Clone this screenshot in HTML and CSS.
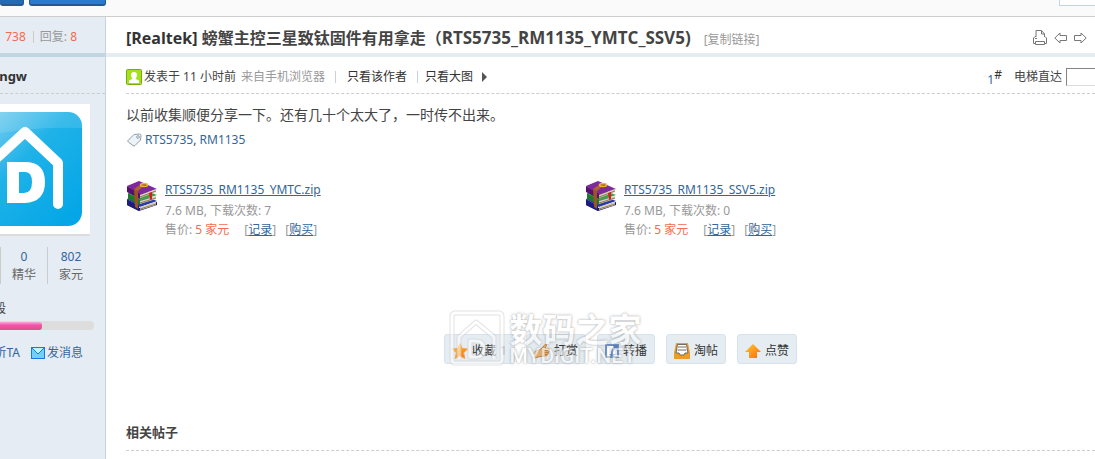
FILE: index.html
```html
<!DOCTYPE html>
<html lang="zh-CN">
<head>
<meta charset="utf-8">
<title>螃蟹主控三星致钛固件有用拿走</title>
<link rel="stylesheet" href="styles.css">
</head>
<body>
<svg class="defs" aria-hidden="true">
  <defs>
    <linearGradient id="sky" x1="0" y1="0" x2="1" y2="1"><stop offset="0" stop-color="#9bd8f2"/><stop offset=".45" stop-color="#1fb2e8"/><stop offset="1" stop-color="#00a4e6"/></linearGradient>
    <linearGradient id="gold" x1="0" y1="0" x2="1" y2="1"><stop offset="0" stop-color="#ffc928"/><stop offset="1" stop-color="#fb6a10"/></linearGradient>
    <symbol id="archive" viewBox="0 0 32 32">
      <path d="M1 21l12 7 18-6v3l-18 6-12-6z" fill="#14146e"/>
      <path d="M1 19l13-5 17 7-17 6z" fill="#2a3ba8"/><path d="M1 19l12 7v5L1 25z" fill="#1c1c80"/><path d="M14 27l16-5v3l-16 5z" fill="#d9cfb6"/><path d="M14 29l16-5" stroke="#8f7c58"/>
      <path d="M2 13l12-5 17 7-17 6z" fill="#43a047"/><path d="M2 13l12 7v5L2 19z" fill="#1d7a2c"/><path d="M14 21l16-5v3l-16 5z" fill="#d9cfb6"/><path d="M14 23l16-5" stroke="#8f7c58"/>
      <path d="M1 6L13 1l18 8-17 6z" fill="#7e2a9b"/><path d="M1 6l13 8v5L1 12z" fill="#551070"/><path d="M14 15l16-6v3l-16 6z" fill="#d9cfb6"/><path d="M14 17l16-6" stroke="#8f7c58"/>
      <path d="M8 9l4 2v18l-3-2z" fill="#9c5424"/><path d="M8 9l9-6 3 1-8 7z" fill="#b3652c"/>
      <ellipse cx="18" cy="5" rx="3.500" ry="1.500" fill="none" stroke="#e8b92c" stroke-width="1.500"/><path d="M23 13l3-1v7l-2 1z" fill="#d02020"/>
    </symbol>
  </defs>
</svg>

<header class="top">
  <div class="top-actions">
    <button class="blue dark" type="button" aria-label="发帖"></button>
    <button class="blue" type="button" aria-label="回复"></button>
  </div>
  <div class="top-box"></div>
</header>

<div class="thread">
  <aside class="side">
    <div class="counts"><b>738</b><i></i><span>回复: <b>8</b></span></div>
    <div class="user"><a href="#">angw</a></div>
    <div class="profile">
      <div class="avatar">
        <svg width="114" height="114" viewBox="0 0 114 114" role="img" aria-label="头像">
          <rect width="114" height="114" rx="14" fill="url(#sky)"/>
          <path d="M0 28Q50 14 114 16V14A14 14 0 0 0 100 0H14A14 14 0 0 0 0 14z" fill="#fff" opacity=".12"/>
          <path d="M20 93V54L57 20l33 31v41" fill="none" stroke="#fff" stroke-width="10" stroke-linecap="round" stroke-linejoin="round"/>
          <path fill-rule="evenodd" d="M39 50h18q20 0 20 20t-20 21H39zm12 10v21h5q8 0 8-11t-8-10z" fill="#fff"/>
        </svg>
      </div>
      <dl class="stats">
        <div><dt>0</dt><dd>精华</dd></div>
        <div><dt>802</dt><dd>家元</dd></div>
      </dl>
      <p class="rank">七段</p>
      <div class="bar"><span style="width:60%"></span></div>
      <div class="links">
        <a href="#">收听TA</a>
        <a href="#"><svg width="14" height="12" viewBox="0 0 14 12"><rect x=".5" y=".5" width="13" height="11" fill="#6fd0fa" stroke="#1a78e0"/><path d="M1 1l6 6 6-6" fill="#c4f0ff" stroke="#1a78e0"/></svg>发消息</a>
      </div>
    </div>
  </aside>

  <main class="main">
    <div class="title">
      <h1><a href="#">[Realtek]</a> 螃蟹主控三星致钛固件有用拿走（<span>RTS5735_RM1135_YMTC_SSV5)</span></h1>
      <a class="copy" href="#">[复制链接]</a>
      <div class="tools">
        <a href="#" aria-label="打印"><svg width="14" height="15" viewBox="0 0 14 15"><path d="M3 7V.5h5.500L11.500 4v3M8.500 1v3h3M3 6.500H2L.5 8v5.500H2m9.500-7h.5L13.500 8v5.500H12M2.500 11.500h9v3h-9zM2 8.500h2" fill="none" stroke="#777"/></svg></a>
        <a href="#" aria-label="上一主题"><svg width="13" height="12" viewBox="0 0 13 12"><path d="M.8 6L6 1v2.500h6.500v5H6V11z" fill="none" stroke="#777"/></svg></a>
        <a href="#" aria-label="下一主题"><svg width="13" height="12" viewBox="0 0 13 12"><path d="M12.200 6L7 1v2.500H.5v5H7V11z" fill="none" stroke="#777"/></svg></a>
      </div>
    </div>

    <div class="meta">
      <svg width="16" height="16" viewBox="0 0 16 16"><rect x=".5" y=".5" width="15" height="15" rx="1" fill="#a4e01c" stroke="#78ac0c"/><path d="M8 3a3 3 0 0 1 3 3c0 1.500-.6 2.500-1.200 3.200V10l3.200 1.600V14H3v-2.400L6.200 10v-.8C5.600 8.500 5 7.500 5 6a3 3 0 0 1 3-3z" fill="#fff"/></svg>
      <span class="posted">发表于 11 小时前</span>
      <span class="from">来自手机浏览器</span>
      <i></i><a href="#">只看该作者</a>
      <i></i><a href="#">只看大图</a>
      <span class="arrow"></span>
      <a class="floor" href="#">1<sup>#</sup></a>
      <label for="jump">电梯直达</label>
      <input id="jump" type="text">
    </div>

    <article class="post">
      <p class="message">以前收集顺便分享一下。还有几十个太大了，一时传不出来。</p>
      <div class="tags">
        <svg width="15" height="14" viewBox="0 0 15 14"><path d="M1 7.500L7 1.500 12.500 1q1.500 0 1.500 1.500L13.500 7 8 12.500q-1 1-2 0L1.300 9q-.8-.7-.3-1.500z" fill="#eef3f7" stroke="#8b9dac"/><circle cx="11" cy="4" r="1.300" fill="#fff" stroke="#8b9dac"/></svg>
        <a href="#">RTS5735</a>, <a href="#">RM1135</a>
      </div>
      <div class="files">
        <div class="file">
          <svg width="32" height="32"><use href="#archive"/></svg>
          <div>
            <p class="name"><a href="#">RTS5735_RM1135_YMTC.zip</a></p>
            <p>7.6 MB, 下载次数: 7</p>
            <p>售价: <b>5 家元</b><span class="act">[<a href="#">记录</a>]</span><span>[<a href="#">购买</a>]</span></p>
          </div>
        </div>
        <div class="file">
          <svg width="32" height="32"><use href="#archive"/></svg>
          <div>
            <p class="name"><a href="#">RTS5735_RM1135_SSV5.zip</a></p>
            <p>7.6 MB, 下载次数: 0</p>
            <p>售价: <b>5 家元</b><span class="act">[<a href="#">记录</a>]</span><span>[<a href="#">购买</a>]</span></p>
          </div>
        </div>
      </div>

      <div class="actions">
        <div class="buttons">
          <button type="button"><svg width="16" height="16" viewBox="0 0 16 16"><path d="M8 .5l2.300 5 5.200.6-3.900 3.600 1.200 5.800L8 12.800l-4.800 2.700 1.200-5.800L.5 6.100l5.200-.6z" fill="url(#gold)" stroke="#f6a04c"/></svg>收藏 <span>1</span></button>
          <button type="button"><svg width="16" height="16" viewBox="0 0 16 16"><path d="M1 8.500L7 6l4-4.500q1.500-1 1.500.5L11 5.500h4q1 .8 0 1.800.6 1-.5 1.900.3 1.200-.8 1.800 0 1.300-1 1.700L6 13.500 1 15z" fill="#eab06a" stroke="#c07d38"/><path d="M10 7.500h4m-4 2h4m-4 2h3" stroke="#c07d38"/></svg>打赏</button>
          <button type="button"><svg width="14" height="14" viewBox="0 0 14 14"><path d="M1 1h12v12H1z" fill="#fff" stroke="#6c8ec4" stroke-width="2"/><path d="M7 1h6v6l-2-2q-3 1-3 5l3 0-4 3-3-3h2q0-5 3-7z" fill="#547dbb"/></svg>转播</button>
          <button type="button"><svg width="16" height="16" viewBox="0 0 16 16"><path d="M2 0h12l2 10v6H0v-6z" fill="#ee9b28"/><path d="M3.500 1.500h9L14 10h-3l-1 2H6l-1-2H2z" fill="#fff" stroke="#756b5d"/><path d="M4 4h8M3.500 7h9" stroke="#756b5d"/></svg>淘帖</button>
          <button type="button"><svg width="16" height="14" viewBox="0 0 16 14"><path d="M8 0l8 8h-4v6H4V8H0z" fill="url(#gold)"/></svg>点赞</button>
        </div>
        <div class="mark" aria-hidden="true">
          <svg width="56" height="56" viewBox="0 0 56 56"><g fill="none" stroke-linejoin="round"><g stroke="#ccc" stroke-width="5"><rect x="3" y="3" width="50" height="50" rx="3"/><path d="M10 49V27L27 12l18 15v22M21 31h6q8 0 8 8t-8 8h-6z"/></g><g stroke="#fff" stroke-width="3"><rect x="3" y="3" width="50" height="50" rx="3"/><path d="M10 49V27L27 12l18 15v22M21 31h6q8 0 8 8t-8 8h-6z"/></g></g></svg>
          <div><strong>数码之家</strong><em>MYDIGIT.NET</em></div>
        </div>
      </div>

      <h2 class="related">相关帖子</h2>
    </article>
  </main>
</div>
</body>
</html>
```

FILE: styles.css
```css
* { box-sizing: border-box; }
body, h1, h2, p, dl, dd { margin: 0; }
body {
  background: #fff;
  color: #444;
  font: 12px/18px "Noto Sans", "Noto Sans CJK SC", sans-serif;
  overflow: hidden;
}
a { color: #369; text-decoration: none; }
svg { flex: none; }
.defs { position: absolute; width: 0; height: 0; }

.top {
  display: flex;
  justify-content: space-between;
  align-items: flex-start;
  height: 17px;
  background: #fafafa;
  border-bottom: 1px solid #cdcdcd;
}
.top-actions { display: flex; gap: 5px; }
.blue {
  width: 77px;
  height: 6px;
  padding: 0;
  border: 1px solid #235994;
  border-top: 0;
  border-bottom-width: 2px;
  border-radius: 0 0 3px 3px;
  background: #2b7acd;
}
.blue.dark { width: 24px; background: #2369b4; border-left: 0; }
.top-box { width: 36px; height: 6px; border: solid #c2d5e3; border-width: 0 0 1px 1px; background: #fff; }

.thread { display: flex; min-height: calc(100vh - 17px); }
.side {
  flex: none;
  width: 106px;
  background: #e5ecf3;
  border-right: 1px solid #c2d5e3;
  overflow: hidden;
}
.counts {
  display: flex;
  justify-content: flex-end;
  align-items: center;
  height: 40px;
  padding: 4px 28px 0 0;
  border-bottom: 4px solid #c2d5e3;
  color: #999;
  white-space: nowrap;
}
.counts b { font-weight: 400; color: #f26c4f; }
.counts i { width: 1px; height: 12px; margin: 0 6px; background: #ccc; }
.counts b + i { margin-left: 7px; }
.user {
  display: flex;
  justify-content: flex-end;
  align-items: center;
  height: 37px;
  padding: 2px 78px 0 0;
  border-bottom: 1px dashed #cdcdcd;
}
.user a { color: #333; font-weight: 700; font-size: 13px; }
.profile { display: flex; flex-direction: column; align-items: flex-end; padding-top: 10px; }
.avatar {
  display: flex;
  margin-right: 15px;
  padding: 8px;
  background: #fff;
  border-bottom: 2px solid #dcdcdc;
}
.stats { display: flex; margin: 11px 11px 0 0; }
.stats div { width: 47px; padding-top: 1px; border-left: 1px solid #ccc; text-align: center; }
.stats dt { color: #369; }
.stats dd { color: #666; }
.rank { margin: 16px 99px 0 0; white-space: nowrap; }
.bar { width: 130px; height: 9px; margin: 3px 11px 0 0; border-radius: 4px; background: #ddd; overflow: hidden; }
.bar span { display: block; height: 8px; margin-top: 1px; border-radius: 0 3px 3px 0; background: linear-gradient(#f9a9dd, #ef55ab 40%, #dc5185); }
.links { display: flex; gap: 11px; margin: 14px 22px 0 0; white-space: nowrap; }
.links a { display: flex; align-items: center; gap: 2px; }

.main { flex: 1; min-width: 0; }
.title { display: flex; align-items: center; height: 40px; padding: 5px 8px 0 20px; border-bottom: 4px solid #e5edf2; }
h1 { font: 700 16px/24px "Open Sans", "Noto Sans CJK SC", sans-serif; white-space: nowrap; }
h1 a { color: #333; }
h1 span { font-size: 17px; }
.copy { margin-left: 13px; padding-top: 4px; color: #999; white-space: nowrap; }
.tools { display: flex; align-items: center; gap: 7px; margin-left: auto; }
.tools a { display: flex; }

.meta {
  display: flex;
  align-items: center;
  height: 37px;
  margin-left: 20px;
  padding-top: 4px;
  border-bottom: 1px dashed #cdcdcd;
  white-space: nowrap;
}
.meta a { color: #333; }
.meta i { width: 1px; height: 12px; margin: 0 10px; background: #c9d3dd; }
.meta a + i { margin-right: 7px; }
.posted { margin: 0 5px 0 2px; }
.from { color: #999; }
.from + i { margin-right: 11px; }
.arrow { margin-left: 9px; border: solid transparent; border-width: 5px 0 5px 5px; border-left-color: #555; }
.meta .floor { margin: 6px 12px 0 auto; color: #369; line-height: 14px; }
.floor sup { font-size: 12px; line-height: 0; color: #333; }
.meta input { width: 29px; height: 18px; margin-left: 4px; border: 1px solid #848484; border-right: 0; border-bottom-color: #ddd; background: #fff; }

.post { margin-left: 20px; }
.message { padding-top: 9px; font-size: 14px; line-height: 24px; }
.tags { display: flex; align-items: center; margin-top: 4px; white-space: pre; color: #444; }
.tags svg { margin: 0 3px 0 1px; }
.files { display: grid; grid-template-columns: 9fr 10fr; margin-top: 31px; }
.file { display: flex; gap: 7px; color: #999; line-height: 19px; }
.file p { white-space: nowrap; }
.name { padding-bottom: 2px; }
.file a { text-decoration: underline; }
.file b { color: #f26c4f; font-weight: 400; }
.act { margin: 0 9px 0 15px; }

.actions { position: relative; display: flex; justify-content: center; margin-top: 95px; padding-left: 20px; }
.buttons { display: flex; gap: 11px; }
.buttons button {
  display: flex;
  align-items: center;
  gap: 4px;
  height: 30px;
  padding: 4px 7px 0;
  border: 1px solid #d7e3ec;
  border-radius: 3px;
  background: #e5edf2;
  color: #333;
  font: inherit;
}
.buttons span { color: #999; }
.mark {
  position: absolute;
  left: calc(50% - 162px);
  bottom: -2px;
  display: flex;
  gap: 5px;
  color: #fff;
  opacity: .55;
  pointer-events: none;
  text-shadow: 0 0 2px #888, 0 0 3px #999;
}
.mark strong { display: block; font: 700 33px/36px "Noto Sans CJK SC", sans-serif; }
.mark em { display: block; font: 500 21px/20px Roboto, sans-serif; }
.related { margin-top: 59px; padding-bottom: 9px; border-bottom: 1px dashed #cdcdcd; color: #444; font-size: 13px; line-height: 18px; }
```
